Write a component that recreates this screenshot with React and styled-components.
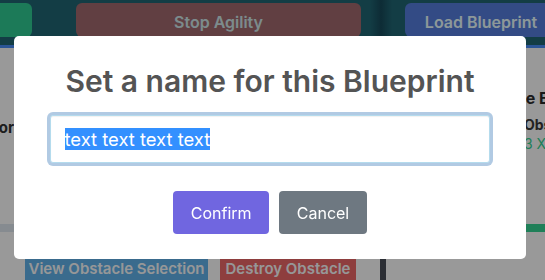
import React, { useEffect, useRef } from 'react';
import styled, { createGlobalStyle } from 'styled-components';

const GlobalStyle = createGlobalStyle`
  html, body {
    margin: 0;
    padding: 0;
    width: 545px;
    height: 280px;
    overflow: hidden;
    background: #ffffff;
    font-family: Inter, "Noto Sans", Arial, sans-serif;
  }
  * {
    box-sizing: border-box;
  }
`;

const Page = styled.div`
  width: 545px;
  height: 280px;
  overflow: hidden;
  display: flex;
  flex-direction: column;
`;

// Top toolbar of the agility editor
const Toolbar = styled.header`
  height: 48px;
  flex-shrink: 0;
  padding-top: 3px;
  display: flex;
  align-items: flex-start;
  gap: 44px;
  overflow: hidden;
  border-bottom: 3px solid #488efa;
  background: linear-gradient(
    90deg,
    #206673 0,
    #206673 370px,
    #17495a 381px,
    #206673 392px,
    #206673 100%
  );
`;

const ToolButton = styled.button`
  flex-shrink: 0;
  width: ${({ $width }) => $width}px;
  height: 34px;
  border: 0;
  border-radius: ${({ $clipped }) => ($clipped ? '0 6px 6px 0' : '6px')};
  background: ${({ $bg }) => $bg};
  color: ${({ $fg }) => $fg || '#ebfdff'};
  font-family: inherit;
  font-size: 16px;
  font-weight: 600;
  padding: 3px 0 0;
`;

const Workspace = styled.main`
  flex: 1;
  display: flex;
  min-height: 0;
  overflow: hidden;
`;

const EditorColumn = styled.section`
  width: 380px;
  flex-shrink: 0;
  padding-top: 71px;
  display: flex;
  flex-direction: column;

  & > * {
    flex-shrink: 0;
  }
`;

const SideTab = styled.div`
  width: 14px;
  overflow: hidden;
  display: flex;
  justify-content: flex-end;
`;

const SideLabel = styled.span`
  white-space: nowrap;
  font-size: 15px;
  font-weight: 700;
  line-height: 18px;
  color: #323232;
`;

const Track = styled.div`
  margin-top: 87px;
  height: 8px;
  background: ${({ $color }) => $color};
`;

const ActionRow = styled.div`
  margin-top: 22px;
  padding-left: 25px;
  display: flex;
  gap: 12px;
`;

const PanelButton = styled.button`
  width: ${({ $width }) => $width}px;
  height: 36px;
  border: 0;
  border-radius: 5px;
  background: ${({ $bg }) => $bg};
  color: #fbfcfd;
  font-family: inherit;
  font-size: 15px;
  font-weight: 600;
  padding: 5px 0 0;
  display: flex;
  justify-content: center;
  align-items: flex-start;
`;

const Divider = styled.div`
  width: 6px;
  flex-shrink: 0;
  background: #484e58;
`;

const InfoColumn = styled.aside`
  flex: 1;
  padding: 41px 0 0 119px;
  display: flex;
  flex-direction: column;
  white-space: nowrap;

  & > * {
    flex-shrink: 0;
  }
`;

const InfoTitle = styled.h3`
  margin: 0;
  font-size: 16px;
  font-weight: 700;
  line-height: 19px;
  color: #2b2b2b;
`;

const InfoList = styled.div`
  padding-left: 19px;
  margin-top: 8px;
  display: flex;
  flex-direction: column;
  gap: 2px;
`;

const InfoLine = styled.div`
  font-size: 14px;
  line-height: 17px;
  font-weight: ${({ $bold }) => ($bold ? 700 : 400)};
  color: ${({ $color }) => $color || '#393939'};
`;

const InfoTrack = styled(Track)`
  margin-top: 72px;
`;

// Sweetalert-like modal
const Backdrop = styled.div`
  position: fixed;
  inset: 0;
  background: rgba(0, 0, 0, 0.4);
  display: flex;
  align-items: flex-start;
  justify-content: flex-start;
  padding: 36px 0 0 14px;
`;

const Popup = styled.div`
  width: 512px;
  background: #ffffff;
  border-radius: 5px;
  padding: 0 0 20px;
  display: flex;
  flex-direction: column;
  color: #545454;
  font-family: Inter, "Noto Sans", Arial, sans-serif;
  font-size: 16px;
`;

const Title = styled.h2`
  margin: 0;
  padding: 28px 30px 0;
  font-size: 30px;
  line-height: 35px;
  font-weight: 600;
  text-align: center;
  color: #545454;
`;

const NameInput = styled.input`
  height: 48px;
  margin: 16px 36px 3px;
  padding: 0 13.5px;
  border: 1px solid #b4dbed;
  border-radius: 3px;
  outline: none;
  background: #ffffff;
  color: #545454;
  font-family: inherit;
  font-size: 18.4px;
  box-shadow: inset 0 1px 1px rgba(0, 0, 0, 0.06), 0 0 0 3px rgba(100, 150, 200, 0.5);

  &::selection {
    background: #3390ff;
    color: #ffffff;
  }
`;

const Actions = styled.div`
  margin-top: 20px;
  display: flex;
  justify-content: center;
`;

const ModalButton = styled.button`
  margin: 5px;
  padding: 11px 17.6px 9px;
  border: 0;
  border-radius: 4px;
  background: ${({ $variant }) => ($variant === 'cancel' ? '#6e7881' : '#7066e0')};
  color: #ffffff;
  font-family: inherit;
  font-size: 16px;
  line-height: 23px;
`;

const App = () => {
  const inputRef = useRef(null);

  useEffect(() => {
    if (inputRef.current) {
      inputRef.current.focus();
      inputRef.current.select();
    }
  }, []);

  return (
    <>
      <GlobalStyle />
      <Page>
        <Toolbar>
          <ToolButton $width={32} $clipped $bg="#30cb93" />
          <ToolButton $width={285} $bg="#a2696e" $fg="#cfe8ea">
            Stop Agility
          </ToolButton>
          <ToolButton $width={152} $bg="#557dde">
            Load Blueprint
          </ToolButton>
        </Toolbar>

        <Workspace>
          <EditorColumn>
            <SideTab>
              <SideLabel>Color</SideLabel>
            </SideTab>
            <Track $color="#dfe8f0" />
            <ActionRow>
              <PanelButton $width={183} $bg="#62b2eb">View Obstacle Selection</PanelButton>
              <PanelButton $width={136} $bg="#ed6868">Destroy Obstacle</PanelButton>
            </ActionRow>
          </EditorColumn>

          <Divider />

          <InfoColumn>
            <InfoTitle>The Blueprint</InfoTitle>
            <InfoList>
              <InfoLine $bold>Obstacles: 3</InfoLine>
              <InfoLine $color="#34d493">3 X 3</InfoLine>
            </InfoList>
            <InfoTrack $color="#34d493" />
          </InfoColumn>
        </Workspace>
      </Page>

      <Backdrop>
        <Popup role="dialog">
          <Title>Set a name for this Blueprint</Title>
          <NameInput ref={inputRef} type="text" defaultValue="text text text text" />
          <Actions>
            <ModalButton>Confirm</ModalButton>
            <ModalButton $variant="cancel">Cancel</ModalButton>
          </Actions>
        </Popup>
      </Backdrop>
    </>
  );
};

export default App;
